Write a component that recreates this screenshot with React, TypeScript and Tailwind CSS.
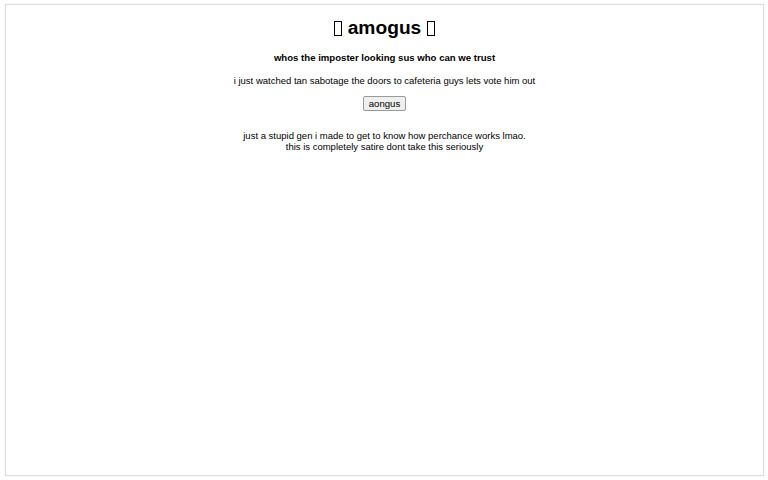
import React from 'react';

function Tofu() {
  return <span className="inline-block w-[8px] h-[15px] border-[1.5px] border-black align-[-1px]" />;
}

export default function App() {
  return (
    <div className="w-[768px] h-[480px] bg-white p-[4px_4px_4px_5px] font-['Liberation_Sans',Arial,sans-serif] text-black">
      <div className="h-full border border-[#dcdcdc] shadow-[0_0_2px_rgba(0,0,0,0.08)] flex flex-col items-center text-center">
        <h1 className="mt-[12px] text-[19.2px] font-bold leading-[22px] flex items-center gap-[6px]">
          <Tofu />
          <span>amogus</span>
          <Tofu />
        </h1>
        <h3 className="mt-[13px] text-[9.6px] font-bold leading-[12px]">
          whos the imposter looking sus who can we trust
        </h3>
        <p className="mt-[11px] text-[9.5px] leading-[12px]">
          i just watched tan sabotage the doors to cafeteria guys lets vote him out
        </p>
        <button className="mt-[9px] px-[5px] h-[15px] text-[9.6px] leading-[12px] bg-[#efefef] border border-[#999] rounded-[2px]">
          aongus
        </button>
        <p className="mt-[19px] text-[9.5px] leading-[11px]">
          just a stupid gen i made to get to know how perchance works lmao.
          <br />
          this is completely satire dont take this seriously
        </p>
      </div>
    </div>
  );
}
